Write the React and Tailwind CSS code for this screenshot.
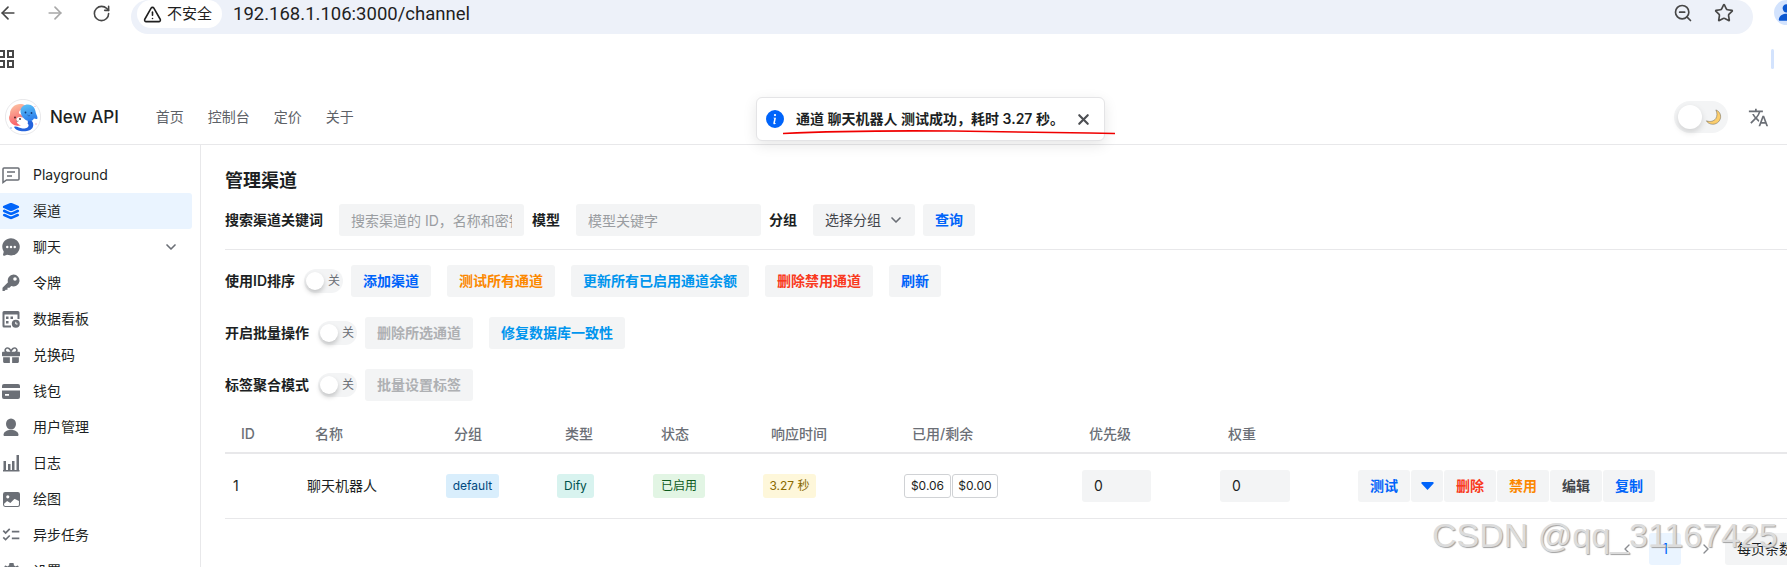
import React from 'react'
import { ArrowLeft, ArrowRight, RotateCw, ZoomOut, Star, TriangleAlert, ChevronDown, ChevronLeft, ChevronRight, X } from 'lucide-react'
import { IoLayers, IoChatbubbleEllipses, IoPerson, IoSettingsSharp } from 'react-icons/io5'
import { FaGift } from 'react-icons/fa'
import { BsImageFill, BsInfoCircleFill } from 'react-icons/bs'
import { MdTranslate, MdChecklist } from 'react-icons/md'

const MessageIcon = () => (
    <svg viewBox="0 0 18 18" className="w-[18px] h-[18px]" fill="none" stroke="#6b6f76" strokeWidth="1.500">
        <path d="M2 2h14a1 1 0 0 1 1 1v10a1 1 0 0 1-1 1H4.500L1 16.500V3a1 1 0 0 1 1-1z" />
        <path d="M5 6h8M5 10h5" />
    </svg>
)

const KeyIcon = () => (
    <svg viewBox="0 0 18 18" className="w-[18px] h-[18px]" fill="#6b6f76">
        <path fillRule="evenodd" d="M11.500.500a6 6 0 1 1-2.300 11.550L7.500 13.700H5.500v2H3.700L2.500 17H.500v-3.200L6 8.300A6 6 0 0 1 11.500.500zM13 3.200a1.800 1.800 0 1 0 0 3.600 1.800 1.800 0 0 0 0-3.600z" />
    </svg>
)

const CardIcon = () => (
    <svg viewBox="0 0 18 15" className="w-[18px] h-[15px]" fill="#6b6f76">
        <path d="M2 0h14a2 2 0 0 1 2 2v2H0V2a2 2 0 0 1 2-2z" />
        <path fillRule="evenodd" d="M0 6.500h18V13a2 2 0 0 1-2 2H2a2 2 0 0 1-2-2zM3 10v1.800h4V10z" />
    </svg>
)

const UserIcon = () => (
    <svg viewBox="0 0 18 18" className="w-[18px] h-[18px]" fill="#6b6f76">
        <ellipse cx="9" cy="6" rx="5" ry="5.500" />
        <path d="M1.500 17c0-3 3-5 7.500-5s7.500 2 7.500 5c0 .500-.500 1-1 1h-13c-.500 0-1-.500-1-1z" />
    </svg>
)

const BoardIcon = () => (
    <svg viewBox="0 0 18 18" className="w-[18px] h-[18px]" fill="#6b6f76">
        <path fillRule="evenodd" d="M2 1h14a1.500 1.500 0 0 1 1.500 1.500V9h-2V4.500h-13v11H9v2H2A1.500 1.500 0 0 1 .500 16V2.500A1.500 1.500 0 0 1 2 1z" />
        <rect x="4" y="6.500" width="2.500" height="2.500" />
        <rect x="4" y="11" width="2.500" height="2.500" />
        <rect x="8.500" y="6.500" width="2.500" height="2.500" />
        <circle cx="13.800" cy="13.800" r="4" />
        <path d="M13.800 11.800v2.200h1.800" stroke="#fff" strokeWidth="1" fill="none" />
    </svg>
)

const BarsIcon = () => (
    <svg viewBox="0 0 18 18" className="w-[18px] h-[18px]" fill="#6b6f76">
        <rect x="1.500" y="7" width="2.500" height="9" />
        <rect x="6" y="10" width="2.500" height="6" />
        <rect x="10" y="7" width="2.500" height="9" />
        <rect x="14.500" y="1" width="2.500" height="15" />
        <rect x="1" y="16" width="16.500" height="1.500" />
    </svg>
)

const gray = 'text-[#6b6f76]'
const navItems = [
    { label: 'Playground', icon: <MessageIcon /> },
    { label: '渠道', active: true, icon: <IoLayers className="text-[20px] text-[#0064fa]" /> },
    { label: '聊天', chevron: true, icon: <IoChatbubbleEllipses className={`text-[20px] ${gray}`} /> },
    { label: '令牌', icon: <KeyIcon /> },
    { label: '数据看板', icon: <BoardIcon /> },
    { label: '兑换码', icon: <FaGift className={`text-[18px] ${gray}`} /> },
    { label: '钱包', icon: <CardIcon /> },
    { label: '用户管理', icon: <UserIcon /> },
    { label: '日志', icon: <BarsIcon /> },
    { label: '绘图', icon: <BsImageFill className={`text-[17px] ${gray}`} /> },
    { label: '异步任务', icon: <MdChecklist className={`text-[20px] ${gray}`} /> },
    { label: '设置', icon: <IoSettingsSharp className={`text-[19px] ${gray}`} /> },
]

const Logo = () => (
    <svg viewBox="0 0 36 36" className="w-[36px] h-[36px] shrink-0">
        <defs>
            <linearGradient id="pinkBlob" x1="0.2" y1="0" x2="0.5" y2="1">
                <stop offset="0" stopColor="#fcc4a4" />
                <stop offset="1" stopColor="#f85a66" />
            </linearGradient>
            <linearGradient id="blueBlob" x1="0.3" y1="0" x2="0.6" y2="1">
                <stop offset="0" stopColor="#5cc0f6" />
                <stop offset="1" stopColor="#2a7bea" />
            </linearGradient>
        </defs>
        <circle cx="18" cy="18" r="17.600" fill="#fff" stroke="#e2e2e4" strokeWidth="0.800" />
        <path d="M5 15c0-6 5-10 10-10 4 0 7 2 7 4 0 1.500-3 1-5 1.500-2 .500-3.500 2-3 4 3 1.500 6 4 5 8-1 3-4 5-8 4-4-.500-7-4-7-8 0-1.500 1-2 1-3.500z" fill="url(#pinkBlob)" />
        <path d="M9 28c2 4 8 5 13 4 5-1 7-4 6-8-.500-2-2-3-4-4l-3 4c2 .500 3 1.500 2.500 3-.500 2-3 2.500-6 2.500-3 0-6-3-8.500-1.500z" fill="#2463dc" />
        <path d="M12 19c2-2 6-1 9 1 2.500 2 2.500 5 0 6-3 1-7 .500-8.500-1.500-1-1.500-1.500-4-.500-5.500z" fill="#fff" />
        <path d="M15.500 12c0-4 3.500-6.500 7.500-6.500s7 3 7.500 7c.300 2.500 2 4.500 2 6.500 0 1.500-2 1-3.500.500-1 2-3 3-5.500 2.500-4.500-1-8-5.500-8-10z" fill="url(#blueBlob)" />
        <circle cx="10" cy="18.500" r="0.900" fill="#3a1f24" />
        <circle cx="15" cy="20" r="0.900" fill="#3a1f24" />
        <path d="M11 21.500c.800 1 1.800 1 2.500.500" stroke="#3a1f24" strokeWidth="0.500" fill="none" />
        <circle cx="20.500" cy="13.500" r="0.900" fill="#123a7a" />
        <circle cx="26.500" cy="14" r="0.900" fill="#123a7a" />
        <path d="M22.500 16c.800 1 1.800 1 2.500.300" stroke="#123a7a" strokeWidth="0.500" fill="none" />
        <circle cx="31" cy="25" r="0.800" fill="#f6a3b5" />
        <circle cx="6" cy="29" r="0.800" fill="#7fb2f5" />
        <circle cx="30" cy="7.500" r="0.600" fill="#f6a3b5" />
    </svg>
)

const Btn = ({ className = '', children }) => (
    <button className={`h-8 px-3 shrink-0 rounded-[3px] bg-[#f3f4f5] text-sm leading-5 font-semibold whitespace-nowrap ${className}`}>
        {children}
    </button>
)

const Toggle = () => (
    <span className="relative flex items-center h-6 w-[39px] shrink-0 rounded-full bg-[#f3f4f5]">
        <span className="ml-[2px] w-[18px] h-[18px] rounded-full bg-white shadow-[0_3px_5px_rgba(0,0,0,0.2)]"></span>
        <span className="ml-[4px] text-xs text-[#6b6f76]">关</span>
    </span>
)

const FieldLabel = ({ className = '', children }) => (
    <span className={`mr-2 text-sm leading-5 font-semibold text-[#1c1f23] whitespace-nowrap ${className}`}>{children}</span>
)

const Tag = ({ className = '', children }) => (
    <span className={`inline-flex items-center justify-center h-6 rounded-[3px] text-xs whitespace-nowrap ${className}`}>{children}</span>
)

const headers = ['ID', '名称', '分组', '类型', '状态', '响应时间', '已用/剩余', '优先级', '权重', '']

const App = () => {
    return (
        <div className="relative h-screen overflow-hidden bg-white font-['Inter','Noto_Sans_CJK_SC',sans-serif] text-[#1c1f23]">
            {/* browser toolbar */}
            <div className="flex items-center h-[34px]">
                <div className="flex items-center w-[131px] shrink-0 gap-[27px] -mt-[8px]">
                    <ArrowLeft className="w-[20px] h-[20px] -ml-[2px] text-[#474747]" strokeWidth={2} />
                    <ArrowRight className="w-[20px] h-[20px] text-[#a8a8a8]" strokeWidth={2} />
                    <RotateCw className="w-[19px] h-[19px] text-[#474747]" strokeWidth={2} />
                </div>
                <div className="flex items-center justify-between w-[1622px] h-[34px] shrink-0 rounded-[17px] bg-[#edf1f9] pl-[6px]">
                    <div className="flex items-center h-[34px] -mt-[6px]">
                        <div className="flex items-center h-[28px] w-[85px] pl-[6px] gap-[5px] rounded-full bg-white">
                            <TriangleAlert className="w-[19px] h-[19px] text-[#1f1f1f]" strokeWidth={2} />
                            <span className="text-[15px] leading-5 text-[#1f1f1f] whitespace-nowrap">不安全</span>
                        </div>
                        <span className="ml-[11px] font-['Roboto',sans-serif] text-[18.500px] leading-6 text-[#1f1f1f]">192.168.1.106:3000/channel</span>
                    </div>
                    <div className="flex items-center gap-[21px] pr-[19px] -mt-[8px]">
                        <ZoomOut className="w-[20px] h-[20px] text-[#474747]" strokeWidth={2} />
                        <Star className="w-[20px] h-[20px] text-[#474747]" strokeWidth={2} />
                    </div>
                </div>
                <div className="flex items-center justify-center ml-[21px] w-[25px] h-[25px] shrink-0 -mt-[9px] rounded-full bg-[#d3e3fd]">
                    <IoPerson className="text-[19px] text-[#0b57d0]" />
                </div>
            </div>

            {/* bookmarks bar */}
            <div className="flex items-center justify-between h-[56px]">
                <svg viewBox="0 0 14 18" className="w-[14px] h-[18px] -mt-[6px]" fill="none" stroke="#474747" strokeWidth="2">
                    <rect x="-2" y="1" width="6" height="6" />
                    <rect x="8" y="1" width="5" height="6" />
                    <rect x="-2" y="11" width="6" height="6" />
                    <rect x="8" y="11" width="5" height="6" />
                </svg>
                <span className="w-[3px] h-[20px] mr-[13px] -mt-[6px] rounded-sm bg-[#d3e3fd]"></span>
            </div>

            {/* app header */}
            <header className="flex items-center h-[55px] border-b border-[#e8e8ea]">
                <div className="ml-[5px]"><Logo /></div>
                <span className="ml-[9px] text-[17px] leading-6 font-medium text-[#1c1f23]">New API</span>
                <nav className="flex items-center gap-6 ml-[37px] text-sm leading-5 text-[#5d6167]">
                    <span>首页</span>
                    <span>控制台</span>
                    <span>定价</span>
                    <span>关于</span>
                </nav>
                <div className="flex items-center ml-auto mr-[18px]">
                    <span className="relative flex items-center w-[54px] h-8 rounded-full bg-[#f3f4f5]">
                        <span className="ml-[4px] w-6 h-6 rounded-full bg-white shadow-[0_3px_6px_rgba(0,0,0,0.15)]"></span>
                        <svg viewBox="0 0 18 18" className="ml-[3px] w-[17px] h-[17px]">
                            <path d="M11.500 1c3 1 5.500 4 5 8-.500 4.500-5 8-10 7-2-.500-4-1.500-5-3.500 4 1.500 8 .500 10-2.500 1.500-2.500 1.500-6 0-9z" fill="#fbcd6c" stroke="#5f5a4d" strokeWidth="0.500" />
                        </svg>
                    </span>
                    <MdTranslate className="ml-[20px] text-[21px] text-[#6b6f76]" />
                </div>
            </header>

            {/* toast */}
            <div className="absolute left-[756px] top-[97px] flex items-center w-[349px] h-[44px] pl-[9px] rounded-md border border-[#e4e4e6] bg-white shadow-[0_4px_14px_rgba(0,0,0,0.1)]">
                <BsInfoCircleFill className="text-[18px] text-[#0064fa]" />
                <span className="ml-[12px] text-sm leading-5 font-semibold text-[#1c1f23] whitespace-nowrap">通道 聊天机器人 测试成功，耗时 3.27 秒。</span>
                <X className="absolute right-[12px] top-[13px] w-[17px] h-[17px] text-[#4d4f53]" strokeWidth={3} />
            </div>
            <svg viewBox="0 0 332 6" className="absolute left-[783px] top-[129px] w-[332px] h-[6px]" fill="none">
                <path d="M0 4.500C50 2 110 1.500 170 2c60 .500 110 1.500 162 2.500" stroke="#f00000" strokeWidth="1.600" />
            </svg>

            <div className="flex h-[422px]">
                {/* sidebar */}
                <aside className="w-[201px] shrink-0 pt-[12px] pr-2 border-r border-[#e8e8ea] overflow-hidden">
                    {navItems.map((item) => (
                        <div
                            key={item.label}
                            className={`flex items-center h-9 shrink-0 rounded-r-[3px] ${item.active ? 'bg-[#eaf4ff]' : ''}`}
                        >
                            <span className="flex items-center justify-center w-[22px]">{item.icon}</span>
                            <span className="ml-[11px] text-sm leading-5 text-[#1c1f23]">{item.label}</span>
                            {item.chevron && <ChevronDown className="ml-auto mr-[13px] w-[16px] h-[16px] text-[#6b6f76]" strokeWidth={2.500} />}
                        </div>
                    ))}
                </aside>

                {/* main */}
                <main className="flex-1 min-w-0 pl-6 pt-[22px] overflow-hidden">
                    <h1 className="text-lg leading-7 font-semibold text-[#1c1f23] mb-[9px]">管理渠道</h1>

                    <div className="flex items-center gap-2 h-8">
                        <FieldLabel>搜索渠道关键词</FieldLabel>
                        <input className="w-[185px] h-8 px-3 rounded-[3px] bg-[#f3f4f5] text-sm placeholder:text-[#9a9da1] outline-none" placeholder="搜索渠道的 ID，名称和密钥 ..." />
                        <FieldLabel>模型</FieldLabel>
                        <input className="w-[185px] h-8 px-3 rounded-[3px] bg-[#f3f4f5] text-sm placeholder:text-[#9a9da1] outline-none" placeholder="模型关键字" />
                        <FieldLabel>分组</FieldLabel>
                        <div className="flex items-center w-[102px] h-8 pl-3 rounded-[3px] bg-[#f3f4f5] text-sm text-[#43464b]">
                            <span>选择分组</span>
                            <ChevronDown className="ml-[7px] w-[16px] h-[16px] text-[#6b6f76]" strokeWidth={2.500} />
                        </div>
                        <Btn className="text-[#0064fa]">查询</Btn>
                    </div>

                    <div className="h-px mt-[13px] mb-[15px] bg-[#e8e8ea]"></div>

                    <div className="flex flex-col gap-5">
                        <div className="flex items-center h-8">
                            <FieldLabel className="w-[71px]">使用ID排序</FieldLabel>
                            <Toggle />
                            <div className="flex items-center gap-4 ml-2">
                                <Btn className="text-[#0064fa]">添加渠道</Btn>
                                <Btn className="text-[#fc8800]">测试所有通道</Btn>
                                <Btn className="text-[#0095ee]">更新所有已启用通道余额</Btn>
                                <Btn className="text-[#f93920]">删除禁用通道</Btn>
                                <Btn className="text-[#0064fa]">刷新</Btn>
                            </div>
                        </div>
                        <div className="flex items-center h-8">
                            <FieldLabel className="w-[85px]">开启批量操作</FieldLabel>
                            <Toggle />
                            <div className="flex items-center gap-4 ml-2">
                                <Btn className="text-[#aeb0b3]">删除所选通道</Btn>
                                <Btn className="text-[#0095ee]">修复数据库一致性</Btn>
                            </div>
                        </div>
                        <div className="flex items-center h-8">
                            <FieldLabel className="w-[85px]">标签聚合模式</FieldLabel>
                            <Toggle />
                            <Btn className="ml-2 text-[#aeb0b3]">批量设置标签</Btn>
                        </div>
                    </div>

                    <table className="w-[1562px] table-fixed border-collapse">
                        <colgroup>
                            <col className="w-[74px]" />
                            <col className="w-[139px]" />
                            <col className="w-[111px]" />
                            <col className="w-[96px]" />
                            <col className="w-[110px]" />
                            <col className="w-[141px]" />
                            <col className="w-[177px]" />
                            <col className="w-[139px]" />
                            <col className="w-[138px]" />
                            <col />
                        </colgroup>
                        <thead>
                            <tr className="h-[52px] border-b-2 border-[#e8e8ea]">
                                {headers.map((h, i) => (
                                    <th key={i} className="pl-4 pb-[7px] align-bottom text-left text-sm leading-[22px] font-medium text-[#6b6f76]">{h}</th>
                                ))}
                            </tr>
                        </thead>
                        <tbody>
                            <tr className="h-[65px] border-b border-[#e8e8ea] text-sm">
                                <td className="pl-2">1</td>
                                <td className="pl-2">聊天机器人</td>
                                <td className="pl-2"><Tag className="w-[53px] bg-[#d9eefc] text-[#01487e]">default</Tag></td>
                                <td className="pl-2"><Tag className="w-[37px] bg-[#d8f3ef] text-[#00524c]">Dify</Tag></td>
                                <td className="pl-2"><Tag className="w-[52px] bg-[#e2f5e4] text-[#0d5a1c]">已启用</Tag></td>
                                <td className="pl-2"><Tag className="w-[53px] bg-[#fef7da] text-[#8a6a00]">3.27 秒</Tag></td>
                                <td className="pl-2">
                                    <div className="flex gap-px">
                                        <Tag className="w-[47px] border border-[#d0d2d5] text-[#1c1f23]">$0.06</Tag>
                                        <Tag className="w-[46px] border border-[#d0d2d5] text-[#1c1f23]">$0.00</Tag>
                                    </div>
                                </td>
                                <td className="pl-[9px]">
                                    <div className="flex items-center w-[69px] h-8 pl-3 rounded-[3px] bg-[#f3f4f5]">0</div>
                                </td>
                                <td className="pl-2">
                                    <div className="flex items-center w-[70px] h-8 pl-3 rounded-[3px] bg-[#f3f4f5]">0</div>
                                </td>
                                <td className="pl-2">
                                    <div className="flex gap-px">
                                        <Btn className="text-[#0064fa]">测试</Btn>
                                        <button className="flex items-center justify-center w-8 h-8 rounded-[3px] bg-[#f3f4f5]">
                                            <svg viewBox="0 0 14 9" className="w-[13px] h-[8px]"><path d="M1 0h12a1 1 0 0 1 .800 1.600L7 9 .200 1.600A1 1 0 0 1 1 0z" fill="#0064fa" /></svg>
                                        </button>
                                        <Btn className="text-[#f93920]">删除</Btn>
                                        <Btn className="text-[#fc8800]">禁用</Btn>
                                        <Btn className="text-[#43464b]">编辑</Btn>
                                        <Btn className="text-[#0064fa]">复制</Btn>
                                    </div>
                                </td>
                            </tr>
                        </tbody>
                    </table>

                    <div className="flex items-center h-8 mt-[14px] pl-[1394px] whitespace-nowrap">
                        <ChevronLeft className="shrink-0 w-[16px] h-[16px] text-[#8a8c90]" strokeWidth={2} />
                        <span className="flex items-center justify-center shrink-0 w-8 h-8 ml-[14px] rounded-[3px] bg-[#eaf4ff] text-sm text-[#0064fa]">1</span>
                        <ChevronRight className="shrink-0 w-[16px] h-[16px] ml-[17px] text-[#8a8c90]" strokeWidth={2} />
                        <span className="flex items-center shrink-0 h-8 ml-[11px] pl-3 pr-3 rounded-[3px] bg-[#f3f4f5] text-sm">每页条数：10</span>
                    </div>
                </main>
            </div>

            {/* watermark */}
            <span className="absolute left-[1432px] top-[515px] font-['Liberation_Sans',sans-serif] text-[34px] leading-10 text-[#dcdcdc] whitespace-nowrap pointer-events-none [text-shadow:1px_1px_1px_#a0a0a0]">CSDN @qq_31167425</span>
        </div>
    )
}

export default App
